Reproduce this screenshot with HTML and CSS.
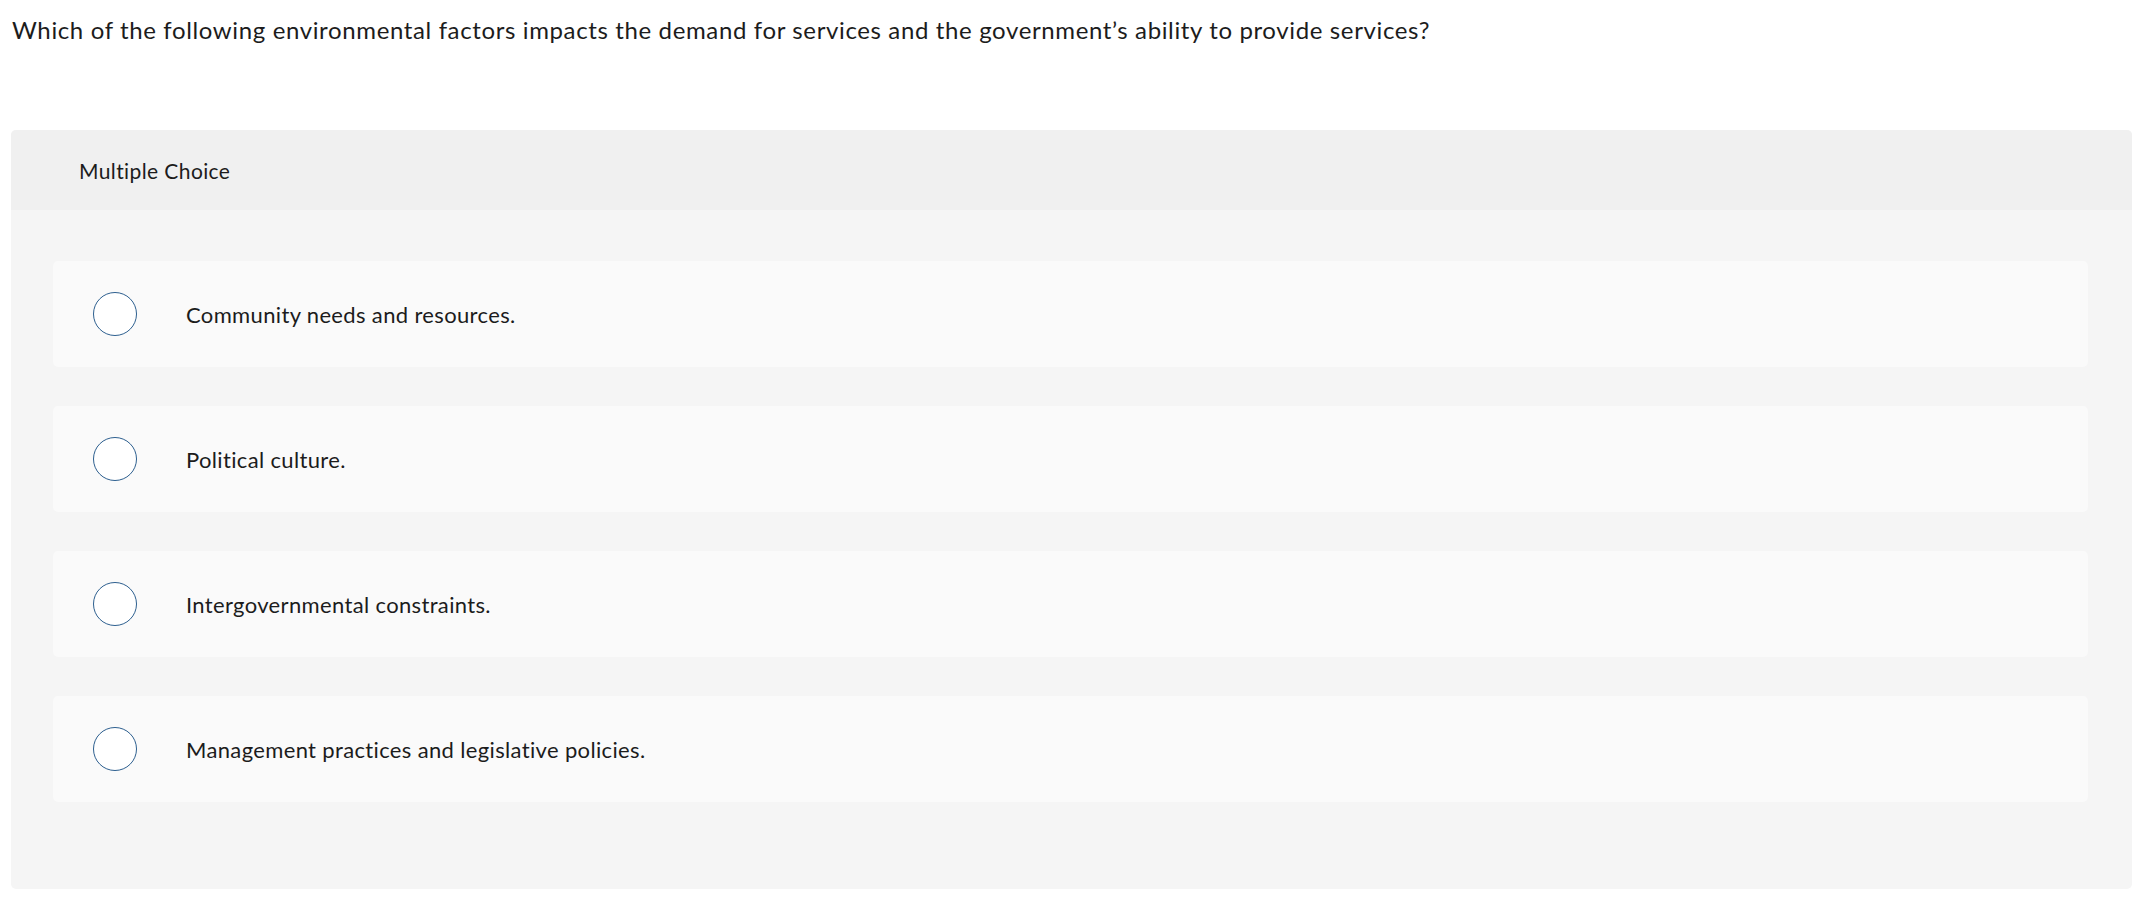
FILE: index.html
```html
<!DOCTYPE html>
<html lang="en">
<head>
<meta charset="utf-8">
<title>Multiple Choice</title>
<link rel="stylesheet" href="styles.css">
</head>
<body>
<main class="page">
  <p class="question">Which of the following environmental factors impacts the demand for services and the government’s ability to provide services?</p>
  <section class="card">
    <header class="card-head">Multiple Choice</header>
    <ul class="choices">
      <li class="choice"><span class="radio"></span><span class="choice-text">Community needs and resources.</span></li>
      <li class="choice"><span class="radio"></span><span class="choice-text">Political culture.</span></li>
      <li class="choice"><span class="radio"></span><span class="choice-text">Intergovernmental constraints.</span></li>
      <li class="choice"><span class="radio"></span><span class="choice-text">Management practices and legislative policies.</span></li>
    </ul>
  </section>
</main>
</body>
</html>
```
FILE: styles.css
```css
* { box-sizing: border-box; }
html, body { margin: 0; padding: 0; background: #ffffff; }
body {
  font-family: Lato, "Liberation Sans", sans-serif;
  color: #1c1c1c;
}
.page {
  padding: 0 22px 0 11px;
}
.question {
  margin: 0;
  padding: 16px 0 0 1px;
  font-size: 24px;
  line-height: 28px;
  letter-spacing: 0.63px;
  height: 130px;
}
.card {
  background: #f5f5f5;
  border-radius: 5px;
  overflow: hidden;
  width: 2121px;
}
.card-head {
  height: 80px;
  background: #f0f0f0;
  display: flex;
  align-items: center;
  padding-left: 68px;
  font-size: 21px;
  letter-spacing: 0.4px;
}
.choices {
  list-style: none;
  margin: 0;
  padding: 51px 44px 87px 42px;
  display: flex;
  flex-direction: column;
  gap: 39px;
}
.choice {
  height: 106px;
  background: #fafafa;
  border-radius: 5px;
  display: flex;
  align-items: center;
  padding-left: 40px;
  font-size: 22px;
  letter-spacing: 0.35px;
}
.radio {
  width: 44px;
  height: 44px;
  border-radius: 50%;
  border: 1.5px solid #2d5f8f;
  background: #ffffff;
  flex: none;
  margin-right: 49px;
}
```
